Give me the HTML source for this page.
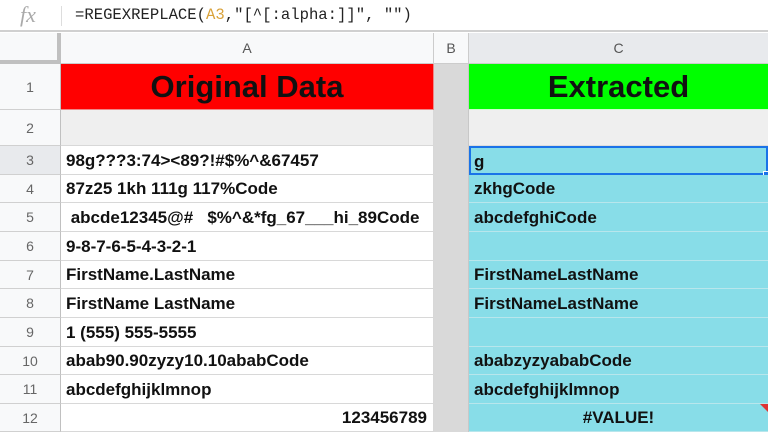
<!DOCTYPE html><html><head><style>
body{margin:0;width:768px;height:432px;overflow:hidden;background:#fff;font-family:"Liberation Sans",Arial,sans-serif;position:relative}
div{position:absolute;box-sizing:border-box}
.rh{left:0;width:61px;background:#f8f9fa;border-right:1px solid #c0c0c0;border-bottom:1px solid #d0d0d0;color:#666;font-size:14px;text-align:center}
.a{left:61px;width:373px;border-bottom:1px solid #d8d8d8;border-right:1px solid #d8d8d8;font-weight:bold;font-size:17px;color:#111;padding-left:5px;white-space:pre}
.b{left:434px;width:35px;background:#d9d9d9;border-right:1px solid #c8c8c8}
.c{left:469px;width:299px;background:#88dde8;border-bottom:1px solid #b8e6ec;font-weight:bold;font-size:17px;color:#111;padding-left:5px}
</style></head><body>
<div style="left:0;top:0;width:768px;height:32px;border-bottom:2px solid #d0d0d0;background:#fff"></div>
<div style="left:20px;top:2px;font-family:'Liberation Serif',serif;font-style:italic;font-size:22px;color:#aaa">fx</div>
<div style="left:61px;top:6px;width:1px;height:20px;background:#ddd"></div>
<div style="left:75px;top:6px;font-family:'Liberation Mono',monospace;font-size:15.6px;color:#222">=REGEXREPLACE(<span style="color:#d9a23a">A3</span>,"[^[:alpha:]]", "")</div>
<div style="left:0;top:33px;width:61px;height:31px;background:#f8f9fa;border-right:4px solid #c0c0c0;border-bottom:4px solid #c0c0c0"></div>
<div style="left:61px;top:33px;width:373px;height:31px;background:#f8f9fa;border-right:1px solid #ccc;border-bottom:1px solid #ccc;color:#555;font-size:14px;text-align:center;line-height:31px">A</div>
<div style="left:434px;top:33px;width:35px;height:31px;background:#f8f9fa;border-right:1px solid #ccc;border-bottom:1px solid #ccc;color:#555;font-size:14px;text-align:center;line-height:31px">B</div>
<div style="left:469px;top:33px;width:299px;height:31px;background:#e8eaed;border-bottom:1px solid #ccc;color:#555;font-size:14px;text-align:center;line-height:31px">C</div>

<div class="rh" style="top:64px;height:46px;line-height:46px">1</div>
<div class="a" style="top:64px;height:46px;background:#ff0000;border-color:#e88;font-size:31px;text-align:center;line-height:46px;padding:0">Original Data</div>
<div class="b" style="top:64px;height:368px"></div>
<div class="c" style="top:64px;height:46px;background:#00ff00;border-color:#cfc;font-size:31px;text-align:center;line-height:46px;padding:0">Extracted</div>

<div class="rh" style="top:110px;height:36px;line-height:36px">2</div>
<div class="a" style="top:110px;height:36px;background:#efefef"></div>
<div class="c" style="top:110px;height:36px;background:#efefef;border-color:#ddd"></div>

<div class="rh" style="top:146px;height:29px;line-height:29px;background:#e8eaed">3</div>
<div class="a" style="top:146px;height:29px;line-height:29px">98g???3:74&gt;&lt;89?!#$%^&amp;67457</div>
<div class="c" style="top:146px;height:29px;line-height:27px;border:2px solid #1a73e8;padding-left:3px">g</div>
<div style="left:763px;top:171px;width:6px;height:6px;background:#1a73e8;border:1px solid #fff"></div>

<div class="rh" style="top:175px;height:28px;line-height:28px">4</div>
<div class="a" style="top:175px;height:28px;line-height:28px">87z25 1kh 111g 117%Code</div>
<div class="c" style="top:175px;height:28px;line-height:28px">zkhgCode</div>

<div class="rh" style="top:203px;height:29px;line-height:29px">5</div>
<div class="a" style="top:203px;height:29px;line-height:29px"> abcde12345@#   $%^&amp;*fg_67___hi_89Code</div>
<div class="c" style="top:203px;height:29px;line-height:29px">abcdefghiCode</div>

<div class="rh" style="top:232px;height:29px;line-height:29px">6</div>
<div class="a" style="top:232px;height:29px;line-height:29px">9-8-7-6-5-4-3-2-1</div>
<div class="c" style="top:232px;height:29px"></div>

<div class="rh" style="top:261px;height:28px;line-height:28px">7</div>
<div class="a" style="top:261px;height:28px;line-height:28px">FirstName.LastName</div>
<div class="c" style="top:261px;height:28px;line-height:28px">FirstNameLastName</div>

<div class="rh" style="top:289px;height:29px;line-height:29px">8</div>
<div class="a" style="top:289px;height:29px;line-height:29px">FirstName LastName</div>
<div class="c" style="top:289px;height:29px;line-height:29px">FirstNameLastName</div>

<div class="rh" style="top:318px;height:29px;line-height:29px">9</div>
<div class="a" style="top:318px;height:29px;line-height:29px">1 (555) 555-5555</div>
<div class="c" style="top:318px;height:29px"></div>

<div class="rh" style="top:347px;height:28px;line-height:28px">10</div>
<div class="a" style="top:347px;height:28px;line-height:28px">abab90.90zyzy10.10ababCode</div>
<div class="c" style="top:347px;height:28px;line-height:28px">ababzyzyababCode</div>

<div class="rh" style="top:375px;height:29px;line-height:29px">11</div>
<div class="a" style="top:375px;height:29px;line-height:29px">abcdefghijklmnop</div>
<div class="c" style="top:375px;height:29px;line-height:29px">abcdefghijklmnop</div>

<div class="rh" style="top:404px;height:28px;line-height:28px">12</div>
<div class="a" style="top:404px;height:28px;line-height:28px;text-align:right;padding-right:6px">123456789</div>
<div class="c" style="top:404px;height:28px;line-height:28px;text-align:center;padding:0">#VALUE!</div>
<div style="left:760px;top:404px;width:0;height:0;border-left:8px solid transparent;border-top:8px solid #d33"></div>
</body></html>
